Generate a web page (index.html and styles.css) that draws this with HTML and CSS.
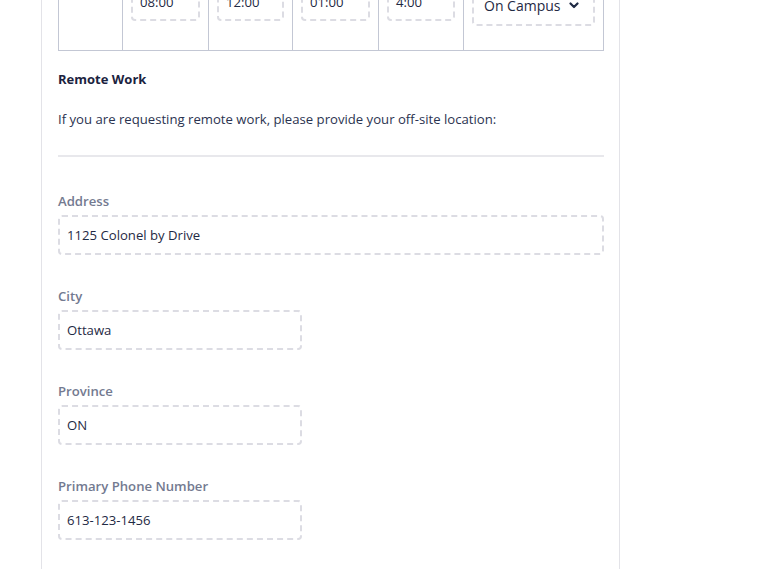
FILE: index.html
```html
<!DOCTYPE html>
<html lang="en">
<head>
<meta charset="utf-8">
<title>Remote Work</title>
<link rel="stylesheet" href="styles.css">
</head>
<body>
<div class="page">
  <div class="card">
    <table class="schedule">
      <colgroup>
        <col class="c-day"><col class="c-a"><col class="c-b"><col class="c-c"><col class="c-d"><col class="c-e">
      </colgroup>
      <tbody>
        <tr>
          <td></td>
          <td><div class="box time">08:00</div></td>
          <td><div class="box time">12:00</div></td>
          <td><div class="box time">01:00</div></td>
          <td><div class="box time">4:00</div></td>
          <td><div class="box select"><span>On Campus</span>
            <svg class="chev" width="10" height="7" viewBox="0 0 10 7"><path d="M1.5 1.5 L5 5 L8.5 1.5" fill="none" stroke="#1f2a44" stroke-width="2.2" stroke-linecap="round" stroke-linejoin="round"/></svg>
          </div></td>
        </tr>
      </tbody>
    </table>

    <h3 class="section-title">Remote Work</h3>
    <p class="intro">If you are requesting remote work, please provide your off-site location:</p>
    <hr class="divider">

    <div class="field">
      <label class="label">Address</label>
      <div class="box input wide">1125 Colonel by Drive</div>
    </div>
    <div class="field">
      <label class="label">City</label>
      <div class="box input half">Ottawa</div>
    </div>
    <div class="field">
      <label class="label">Province</label>
      <div class="box input half">ON</div>
    </div>
    <div class="field">
      <label class="label">Primary Phone Number</label>
      <div class="box input half">613-123-1456</div>
    </div>
  </div>
</div>
</body>
</html>
```
FILE: styles.css
```css
html, body {
  margin: 0;
  padding: 0;
  background: #ffffff;
  overflow: hidden;
}
body {
  font-family: "Open Sans", "Noto Sans", sans-serif;
  font-size: 13.15px;
  color: #1f2a44;
}
.page {
  padding-left: 41px;
  height: 569px;
  overflow: hidden;
}
.card {
  width: 546px;
  margin-top: -30px;
  padding: 0 15px 80px 16px;
  border-left: 1px solid #e3e3e8;
  border-right: 1px solid #e3e3e8;
}
.schedule {
  width: 545px;
  border-collapse: collapse;
  table-layout: fixed;
}
.c-day { width: 64px; }
.c-a { width: 86px; }
.c-b { width: 84px; }
.c-c { width: 86px; }
.c-d { width: 85px; }
.c-e { width: 140px; }
.schedule td {
  border: 1px solid #c3c7d4;
  padding: 12px 8px 0;
  height: 80px;
  vertical-align: top;
  box-sizing: border-box;
}
.box {
  border: 2px dashed #dcdce3;
  border-radius: 4px;
  box-sizing: border-box;
  display: flex;
  align-items: center;
  color: #1f2a44;
}
.time {
  height: 38px;
  padding-left: 7px;
}
.select {
  height: 42px;
  margin-top: 1px;
  padding: 0 14px 0 10px;
  justify-content: space-between;
  font-size: 14px;
}
.chev { display: block; }
.section-title {
  margin: 19px 0 0;
  font-size: 13px;
  font-weight: 700;
  line-height: 18px;
  color: #1b2340;
}
.intro {
  margin: 22px 0 0;
  line-height: 18px;
  color: #2b3350;
}
.divider {
  margin: 27px 0 0;
  border: 0;
  height: 2px;
  background: #e8e8ec;
}
.field {
  margin-top: 35px;
}
.field + .field {
  margin-top: 32px;
}
.label {
  display: block;
  font-weight: 600;
  color: #737a90;
  line-height: 18px;
  margin-bottom: 5px;
}
.input {
  height: 40px;
  padding-left: 7px;
}
.wide { width: 546px; }
.half { width: 244px; }
```
